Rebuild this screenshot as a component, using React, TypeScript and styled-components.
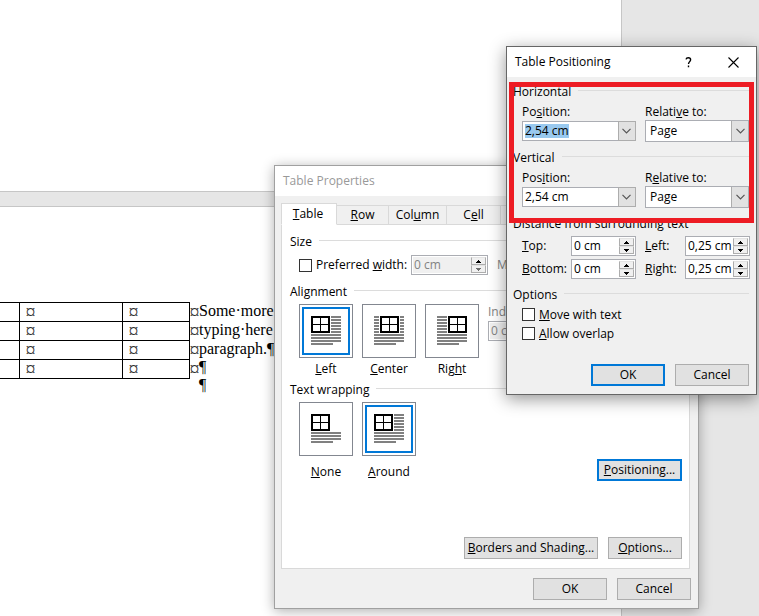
import React, { useId } from "react";
import styled, { createGlobalStyle, css } from "styled-components";

const GlobalStyle = createGlobalStyle`
  *, *::before, *::after { box-sizing: border-box; }
  html, body, #root { height: 100%; }
  body { margin: 0; overflow: hidden; background: #e6e6e6; }
  button, input, select { font: inherit; color: inherit; margin: 0; border-radius: 0; }
  fieldset { margin: 0; padding: 0; border: 0; min-width: 0; }
`;

/* ---------- document ---------- */

const Workspace = styled.div`
  position: relative;
  display: flex;
  height: 100%;
  min-height: 616px;
  overflow: hidden;
  background: #e6e6e6;
`;

const Pages = styled.div`
  flex: 1;
  display: flex;
  flex-direction: column;
  gap: 14px;
  margin-right: 137px;
`;

const Page = styled.section<{ $last?: boolean }>`
  background: #fff;
  border: 0 solid #c6c6c6;
  border-right-width: 1px;
  ${(p) =>
    p.$last
      ? css`
          flex: 1;
          border-top-width: 1px;
          padding-top: 94px;
        `
      : css`
          height: 192px;
          border-bottom-width: 1px;
        `}
`;

const DocRow = styled.div`
  display: flex;
  align-items: flex-start;
  font: 16px/19px "Liberation Serif", "Times New Roman", serif;
  color: #000;
`;

const DocTable = styled.table`
  width: 199px;
  table-layout: fixed;
  border-collapse: collapse;
  margin-top: 1px;
`;

const DocCell = styled.td<{ $w: number }>`
  width: ${(p) => p.$w}px;
  height: 19px;
  padding: 0 0 0 6px;
  font-size: 20px;
  line-height: 18px;
  color: #333;
  border: 1px solid #000;
  border-left-width: ${(p) => (p.$w === 19 ? 0 : 1)}px;
`;

const RowEnd = styled.td`
  padding: 0;
  font-size: 20px;
  line-height: 18px;
  color: #333;
  border: 0;
`;

const DocText = styled.p<{ $mark?: boolean }>`
  margin: 0;
  line-height: ${(p) => (p.$mark ? 18 : 19)}px;
  white-space: nowrap;
`;

/* ---------- windows ---------- */

const Window = styled.section<{ $active?: boolean }>`
  position: absolute;
  isolation: isolate;
  display: flex;
  flex-direction: column;
  background: #f0f0f0;
  font: 12px/16px "Open Sans", "Noto Sans", sans-serif;
  color: #000;
  border: 1px solid ${(p) => (p.$active ? "#666" : "#a0a0a0")};
  box-shadow: ${(p) =>
    p.$active ? "0 4px 16px rgba(0,0,0,.42)" : "0 2px 12px rgba(0,0,0,.32)"};
`;

const PropertiesWindow = styled(Window)`
  left: 274px;
  top: 165px;
  width: 425px;
`;

const PositioningWindow = styled(Window)`
  left: 506px;
  top: 46px;
  width: 251px;
`;

const TitleBar = styled.header<{ $muted?: boolean }>`
  display: flex;
  align-items: center;
  height: 30px;
  padding: 0 8px;
  background: #fff;
  color: ${(p) => (p.$muted ? "#999" : "#000")};
`;

const Title = styled.h1`
  flex: 1;
  margin: 0;
  font-size: 12px;
  font-weight: 400;
`;

const CaptionButton = styled.button`
  display: grid;
  place-items: center;
  width: 45px;
  height: 30px;
  padding: 0;
  border: 0;
  background: none;
  &:last-child { margin-right: -8px; }
`;

const PushButton = styled.button<{ $primary?: boolean; $wide?: number }>`
  height: 22px;
  width: ${(p) => p.$wide ?? 74}px;
  padding: 0;
  line-height: 16px;
  white-space: nowrap;
  background: #e1e1e1;
  border: ${(p) => (p.$primary ? "2px solid #0078d7" : "1px solid #adadad")};
`;

const ButtonRow = styled.div<{ $top: number }>`
  display: flex;
  justify-content: flex-end;
  gap: 10px;
  margin-top: ${(p) => p.$top}px;
`;

const Heading = styled.h2`
  display: flex;
  align-items: center;
  gap: 7px;
  margin: 0;
  height: 16px;
  padding-top: 2px;
  font-size: 12px;
  font-weight: 400;
  white-space: nowrap;
  &::after {
    content: "";
    flex: 1;
    height: 1px;
    margin-bottom: 3px;
    background: #dcdcdc;
  }
`;

/* ---------- fields ---------- */

const CheckLabel = styled.label`
  display: flex;
  align-items: center;
  gap: 4px;
  height: 19px;
  white-space: nowrap;
`;

const CheckBox = styled.input`
  appearance: none;
  width: 13px;
  height: 13px;
  background: #fff;
  border: 1px solid #333;
`;

const SpinFrame = styled.div<{ $w: number; $off?: boolean }>`
  display: flex;
  width: ${(p) => p.$w}px;
  height: 20px;
  padding: 1px;
  background: #fff;
  border: 1px solid #abadb3;
  color: ${(p) => (p.$off ? "#6d6d6d" : "#000")};
`;

const SpinInput = styled.input`
  flex: 1;
  min-width: 0;
  padding: 0 0 0 1px;
  border: 0;
  outline: 0;
  background: #fff;
  &:disabled { background: #f0f0f0; color: #838383; }
`;

const SpinButtons = styled.div`
  display: grid;
  grid-template-rows: 1fr 1fr;
  width: 15px;
`;

const SpinButton = styled.button`
  display: grid;
  place-items: center;
  padding: 0;
  background: #f0f0f0;
  border: 1px solid #adadad;
  border-top-color: #e3e3e3;
`;

const ComboFrame = styled.div`
  display: flex;
  width: 114px;
  height: 20px;
  background: #fff;
  border: 1px solid #abadb3;
`;

const ComboInput = styled.input`
  flex: 1;
  min-width: 0;
  padding: 0;
  border: 0;
  outline: 0;
  background: transparent;
`;

const ComboField = styled.div<{ $selected?: boolean }>`
  flex: 1;
  display: flex;
  min-width: 0;
  margin: 2px 0 2px 2px;
  background: linear-gradient(${(p) => (p.$selected ? "#99c9ef, #99c9ef" : "#fff, #fff")}) left / 44px 100% no-repeat;
`;

const ComboButton = styled.button`
  display: grid;
  place-items: center;
  width: 18px;
  height: 20px;
  margin: -1px -1px -1px auto;
  padding: 0 1px 0 0;
  background: #e1e1e1;
  border: 1px solid #adadad;
`;

const SelectFrame = styled.div`
  display: grid;
  grid-template-columns: 1fr 17px;
  width: 104px;
  height: 22px;
  background: #fff;
  border: 1px solid #abadb3;
`;

const SelectBox = styled.select`
  grid-area: 1 / 1 / 2 / 3;
  appearance: none;
  width: 100%;
  padding: 0 0 0 4px;
  border: 0;
  background: transparent;
`;

const SelectArrow = styled.span`
  grid-area: 1 / 2 / 2 / 3;
  display: grid;
  place-items: center;
  background: #e1e1e1;
  border-left: 1px solid #adadad;
  pointer-events: none;
`;

const Chevron = () => (
  <svg width="9" height="6" viewBox="0 0 9 6" fill="none" stroke="#555" strokeWidth="1.2" aria-hidden>
    <path d="M.5.8l4 4 4-4" />
  </svg>
);

const Triangle = ({ down, off }: { down?: boolean; off?: boolean }) => (
  <svg width="5" height="3" viewBox="0 0 5 3" fill={off ? "#6d6d6d" : "#000"} shapeRendering="crispEdges" aria-hidden>
    <path d={down ? "M0 0h5v1h-1v1h-1v1h-1v-1h-1v-1h-1z" : "M2 0h1v1h1v1h1v1h-5v-1h1v-1h1z"} />
  </svg>
);

function Spinner({ id, value, width, off }: { id: string; value: string; width: number; off?: boolean }) {
  return (
    <SpinFrame $w={width} $off={off}>
      <SpinInput id={id} defaultValue={value} disabled={off} />
      <SpinButtons>
        <SpinButton type="button" aria-label="Increase" disabled={off}>
          <Triangle />
        </SpinButton>
        <SpinButton type="button" aria-label="Decrease" disabled={off}>
          <Triangle down off={off} />
        </SpinButton>
      </SpinButtons>
    </SpinFrame>
  );
}

/* ---------- Table Properties ---------- */

const PropertiesBody = styled.div`
  display: flex;
  flex-direction: column;
  padding: 7px 7px 8px 6px;
`;

const TabList = styled.nav`
  display: flex;
  align-items: flex-end;
  height: 22px;
  margin-bottom: -1px;
  z-index: 1;
`;

const Tab = styled.button<{ $w: number; $on?: boolean }>`
  width: ${(p) => p.$w}px;
  height: ${(p) => (p.$on ? 22 : 20)}px;
  padding: ${(p) => (p.$on ? "0 2px 0 0" : "0")};
  background: ${(p) => (p.$on ? "#fff" : "#f0f0f0")};
  border: 1px solid #d9d9d9;
  ${(p) => (p.$on ? "border-bottom-color: #fff;" : "border-left: 0;")}
`;

const TabPanel = styled.div`
  display: flex;
  flex-direction: column;
  margin-right: 1px;
  padding: 8px 7px 9px 8px;
  background: #fff;
  border: 1px solid #d9d9d9;
`;

const WidthRow = styled.div`
  display: flex;
  align-items: center;
  height: 20px;
  margin: 6px 0 8px 9px;
`;

const WidthCheck = styled(CheckLabel)`
  width: 112px;
`;

const Muted = styled.label`
  color: #838383;
  white-space: nowrap;
`;

const UnitLabel = styled(Muted)`
  margin-left: 9px;
`;

const Options = styled.fieldset<{ $gap: number }>`
  display: flex;
  gap: 9px;
  margin: 5px 0 ${(p) => p.$gap}px 9px;
`;

const Choice = styled.label<{ $space: number }>`
  display: flex;
  flex-direction: column;
  align-items: center;
  gap: ${(p) => p.$space}px;
`;

const ChoiceTile = styled.span`
  display: grid;
  place-items: center;
  width: 54px;
  height: 54px;
  background: #fff;
  border: 1px solid #838790;
`;

const ChoiceRadio = styled.input`
  grid-area: 1 / 1;
  appearance: none;
  width: 48px;
  height: 48px;
  &:checked { border: 2px solid #0078d7; }
`;

const ChoiceArt = styled.svg`
  grid-area: 1 / 1;
  pointer-events: none;
`;

const Indent = styled.div`
  display: flex;
  flex-direction: column;
  gap: 1px;
  white-space: nowrap;
`;

const PositioningRow = styled(ButtonRow)`
  margin-bottom: 56px;
`;

type Wrap = "left" | "center" | "right" | "none";

const gridLeft: Record<Wrap, number> = { left: 0, center: 6, right: 11, none: 0 };
const sideLines: Record<Wrap, [number, number][]> = {
  left: [[20, 10]],
  center: [[0, 5], [26, 4]],
  right: [[0, 10]],
  none: [],
};

function WrapArt({ kind }: { kind: Wrap }) {
  const x = gridLeft[kind];
  return (
    <ChoiceArt width="30" height="30" viewBox="0 0 30 30" shapeRendering="crispEdges" aria-hidden>
      <g fill="#808080">
        {sideLines[kind].flatMap(([left, w]) =>
          [0, 3, 6, 9, 12, 15].map((y) => <rect key={`${left}-${y}`} x={left} y={y} width={w} height="2" />)
        )}
        {[18, 21, 24, 27].map((y) => (
          <rect key={y} x="0" y={y} width={y === 27 ? 22 : 30} height="2" />
        ))}
      </g>
      <rect x={x} y="0" width="19" height="17" fill="#000" />
      <g fill="#fff">
        <rect x={x + 2} y="2" width="7" height="6" />
        <rect x={x + 10} y="2" width="7" height="6" />
        <rect x={x + 2} y="9" width="7" height="6" />
        <rect x={x + 10} y="9" width="7" height="6" />
      </g>
    </ChoiceArt>
  );
}

function WrapChoice(props: {
  group: string;
  kind: Wrap;
  space: number;
  checked?: boolean;
  children: React.ReactNode;
}) {
  return (
    <Choice $space={props.space}>
      <ChoiceTile>
        <ChoiceRadio type="radio" name={props.group} defaultChecked={props.checked} />
        <WrapArt kind={props.kind} />
      </ChoiceTile>
      <span>{props.children}</span>
    </Choice>
  );
}

function TableProperties() {
  return (
    <PropertiesWindow role="dialog" aria-label="Table Properties">
      <TitleBar $muted>
        <Title>Table Properties</Title>
      </TitleBar>
      <PropertiesBody>
        <TabList>
          <Tab $w={56} $on><u>T</u>able</Tab>
          <Tab $w={52}><u>R</u>ow</Tab>
          <Tab $w={58}>Col<u>u</u>mn</Tab>
          <Tab $w={54}>C<u>e</u>ll</Tab>
          <Tab $w={58} aria-label="Alt Text" />
        </TabList>
        <TabPanel>
          <Heading>Size</Heading>
          <WidthRow>
            <WidthCheck>
              <CheckBox type="checkbox" />
              <span>Preferred <u>w</u>idth:</span>
            </WidthCheck>
            <Spinner id="preferred-width" value="0 cm" width={77} off />
            <UnitLabel htmlFor="preferred-width">Measure in:</UnitLabel>
          </WidthRow>
          <Heading>Alignment</Heading>
          <Options $gap={4}>
            <WrapChoice group="align" kind="left" space={3} checked><u>L</u>eft</WrapChoice>
            <WrapChoice group="align" kind="center" space={3}><u>C</u>enter</WrapChoice>
            <WrapChoice group="align" kind="right" space={3}>Rig<u>h</u>t</WrapChoice>
            <Indent>
              <Muted htmlFor="indent">Indent from left:</Muted>
              <Spinner id="indent" value="0 cm" width={77} off />
            </Indent>
          </Options>
          <Heading>Text wrapping</Heading>
          <Options $gap={0}>
            <WrapChoice group="wrap" kind="none" space={8}><u>N</u>one</WrapChoice>
            <WrapChoice group="wrap" kind="left" space={8} checked><u>A</u>round</WrapChoice>
          </Options>
          <PositioningRow $top={-21}>
            <PushButton $primary $wide={85}><u>P</u>ositioning...</PushButton>
          </PositioningRow>
          <ButtonRow $top={0}>
            <PushButton $wide={134}><u>B</u>orders and Shading...</PushButton>
            <PushButton><u>O</u>ptions...</PushButton>
          </ButtonRow>
        </TabPanel>
        <ButtonRow $top={9}>
          <PushButton>OK</PushButton>
          <PushButton>Cancel</PushButton>
        </ButtonRow>
      </PropertiesBody>
    </PropertiesWindow>
  );
}

/* ---------- Table Positioning ---------- */

const PositioningBody = styled.div`
  padding: 6px 7px 8px 6px;
`;

const PlacementGrid = styled.div`
  display: grid;
  grid-template-columns: 114px 104px;
  grid-template-rows: 16px 22px;
  column-gap: 9px;
  align-items: center;
  margin: 5px 0 7px 9px;
`;

const DistanceGrid = styled.div`
  display: grid;
  grid-template-columns: 49px 65px 9px 40px 65px;
  row-gap: 3px;
  align-items: center;
  margin: 5px -1px 7px 9px;
`;

const RightLabel = styled.label`
  grid-column: 4;
`;

const Checks = styled.div`
  margin: 3px 0 0 9px;
`;

const Annotation = styled.div`
  position: absolute;
  left: 2px;
  top: 35px;
  width: 245px;
  height: 141px;
  border: 5px solid #ed1c24;
  pointer-events: none;
`;

function Placement({ selected, relative }: { selected?: boolean; relative: React.ReactNode }) {
  const id = useId();
  return (
    <PlacementGrid>
      <label htmlFor={`${id}p`}>Po{selected ? <><u>s</u>i</> : <>s<u>i</u></>}tion:</label>
      <label htmlFor={`${id}r`}>{relative}</label>
      <ComboFrame>
        <ComboField $selected={selected}>
          <ComboInput id={`${id}p`} defaultValue="2,54 cm" />
        </ComboField>
        <ComboButton type="button" aria-label="Show positions"><Chevron /></ComboButton>
      </ComboFrame>
      <SelectFrame>
        <SelectArrow><Chevron /></SelectArrow>
        <SelectBox id={`${id}r`} defaultValue="Page">
          <option>Page</option>
          <option>Margin</option>
        </SelectBox>
      </SelectFrame>
    </PlacementGrid>
  );
}

function TablePositioning() {
  return (
    <PositioningWindow $active role="dialog" aria-label="Table Positioning">
      <TitleBar>
        <Title>Table Positioning</Title>
        <CaptionButton aria-label="Help">
          <svg width="7" height="11" viewBox="0 0 7 11" fill="none" stroke="#000" strokeWidth="1.4" aria-hidden>
            <path d="M1 2.3C1.3 1.1 2.3.8 3.3.8c1.4 0 2.3.8 2.3 1.9 0 1.8-2.1 2.1-2.1 4.4M3.5 8.6v1.6" />
          </svg>
        </CaptionButton>
        <CaptionButton aria-label="Close">
          <svg width="11" height="11" viewBox="0 0 11 11" fill="none" stroke="#000" strokeWidth="1.1" aria-hidden>
            <path d="M.5.5l10 10M10.5.5l-10 10" />
          </svg>
        </CaptionButton>
      </TitleBar>
      <PositioningBody>
        <Heading>Horizontal</Heading>
        <Placement selected relative={<>Relati<u>v</u>e to:</>} />
        <Heading>Vertical</Heading>
        <Placement relative={<>R<u>e</u>lative to:</>} />
        <Heading>Distance from surrounding text</Heading>
        <DistanceGrid>
          <label htmlFor="top"><u>T</u>op:</label>
          <Spinner id="top" value="0 cm" width={65} />
          <RightLabel htmlFor="left"><u>L</u>eft:</RightLabel>
          <Spinner id="left" value="0,25 cm" width={65} />
          <label htmlFor="bottom"><u>B</u>ottom:</label>
          <Spinner id="bottom" value="0 cm" width={65} />
          <RightLabel htmlFor="right"><u>R</u>ight:</RightLabel>
          <Spinner id="right" value="0,25 cm" width={65} />
        </DistanceGrid>
        <Heading>Options</Heading>
        <Checks>
          <CheckLabel><CheckBox type="checkbox" /><span><u>M</u>ove with text</span></CheckLabel>
          <CheckLabel><CheckBox type="checkbox" /><span><u>A</u>llow overlap</span></CheckLabel>
        </Checks>
        <ButtonRow $top={21}>
          <PushButton $primary>OK</PushButton>
          <PushButton>Cancel</PushButton>
        </ButtonRow>
      </PositioningBody>
      <Annotation />
    </PositioningWindow>
  );
}

export default function App() {
  return (
    <Workspace>
      <GlobalStyle />
      <Pages>
        <Page />
        <Page $last>
          <DocRow>
            <DocTable>
              <tbody>
                {[0, 1, 2, 3].map((row) => (
                  <tr key={row}>
                    <DocCell $w={19} />
                    <DocCell $w={103}>¤</DocCell>
                    <DocCell $w={67}>¤</DocCell>
                    <RowEnd>¤</RowEnd>
                  </tr>
                ))}
              </tbody>
            </DocTable>
            <div>
              <DocText>Some·more·</DocText>
              <DocText>typing·here·</DocText>
              <DocText>paragraph.¶</DocText>
              <DocText $mark>¶</DocText>
              <DocText $mark>¶</DocText>
            </div>
          </DocRow>
        </Page>
      </Pages>
      <TableProperties />
      <TablePositioning />
    </Workspace>
  );
}
